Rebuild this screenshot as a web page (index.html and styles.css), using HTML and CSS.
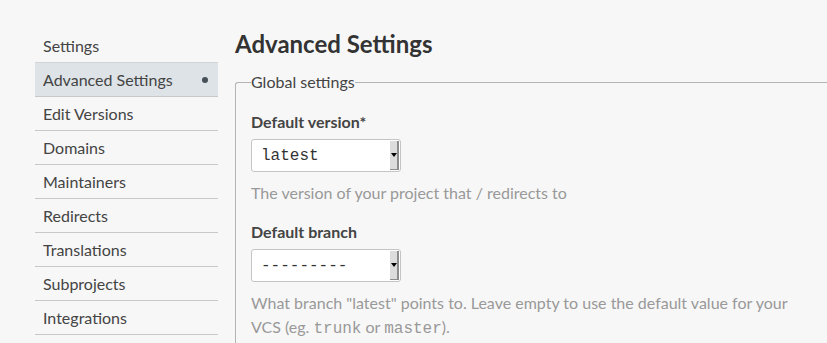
FILE: index.html
```html
<!DOCTYPE html>
<html lang="en">
<head>
<meta charset="utf-8">
<title>Advanced Settings</title>
<link rel="stylesheet" href="styles.css">
</head>
<body>
<div class="page">
  <nav class="sidenav">
    <ul>
      <li><a href="#">Settings</a></li>
      <li class="active"><a href="#">Advanced Settings</a></li>
      <li><a href="#">Edit Versions</a></li>
      <li><a href="#">Domains</a></li>
      <li><a href="#">Maintainers</a></li>
      <li><a href="#">Redirects</a></li>
      <li><a href="#">Translations</a></li>
      <li><a href="#">Subprojects</a></li>
      <li><a href="#">Integrations</a></li>
    </ul>
  </nav>
  <main class="content">
    <h1 class="title">Advanced Settings</h1>
    <fieldset class="group">
      <legend class="group-legend">Global settings</legend>
      <div class="field">
        <label class="field-label" for="dv">Default version*</label>
        <div class="select"><span class="select-value">latest</span><span class="select-btn"><span class="arrow"></span></span></div>
        <p class="help">The version of your project that / redirects to</p>
      </div>
      <div class="field">
        <label class="field-label" for="db">Default branch</label>
        <div class="select"><span class="select-value">---------</span><span class="select-btn"><span class="arrow"></span></span></div>
        <p class="help">What branch "latest" points to. Leave empty to use the default value for your VCS (eg. <code>trunk</code> or <code>master</code>).</p>
      </div>
    </fieldset>
  </main>
</div>
</body>
</html>
```
FILE: styles.css
```css
html, body {
  margin: 0;
  padding: 0;
  background: #f7f7f7;
  overflow: hidden;
}
body {
  font-family: Lato, "Open Sans", sans-serif;
  font-size: 16px;
  color: #444;
}
.page {
  display: flex;
  padding: 29px 0 0 35px;
  gap: 17px;
}
.sidenav {
  width: 183px;
  flex: none;
}
.sidenav ul {
  list-style: none;
  margin: 0;
  padding: 0;
}
.sidenav li {
  border-bottom: 1px solid #c8c8c8;
}
.sidenav li:first-child {
  border-bottom-color: #d4d4d4;
}
.sidenav a {
  display: flex;
  justify-content: space-between;
  align-items: center;
  height: 33px;
  padding: 0 8px;
  color: #444;
  text-decoration: none;
}
.sidenav li.active a {
  background: #dde3e6;
}
.sidenav li.active a::after {
  content: "";
  width: 6px;
  height: 6px;
  border-radius: 50%;
  background: #454f57;
  margin-right: 2px;
}
.content {
  flex: 1;
  min-width: 0;
}
.title {
  margin: -2px 0 11px;
  font-size: 24px;
  font-weight: 700;
  line-height: 34px;
  color: #333;
}
.group {
  margin: 0;
  border: 1px solid #b4b4b4;
  border-right: none;
  border-radius: 3px 0 0 0;
  padding: 20px 16px 0 15px;
}
.group-legend {
  padding: 0;
  line-height: 20px;
  color: #444;
}
.field {
  margin-bottom: 17px;
}
.field-label {
  display: block;
  font-weight: 700;
  line-height: 20px;
  margin-bottom: 7px;
  color: #444;
}
.select {
  display: flex;
  width: 148px;
  height: 31px;
  border: 1px solid #c4c4c4;
  border-radius: 3px;
  background: #fff;
  box-sizing: content-box;
}
.select-value {
  flex: 1;
  padding-left: 9px;
  font-family: "Liberation Mono", monospace;
  font-size: 16px;
  line-height: 32px;
  color: #333;
}
.select-btn {
  width: 7px;
  margin: 1px 1px 1px 0;
  background: #dcdcdc;
  border-right: 2px solid #8c8c8c;
  border-bottom: 1px solid #8c8c8c;
  display: flex;
  align-items: center;
  justify-content: center;
}
.arrow {
  width: 0;
  height: 0;
  border-left: 3px solid transparent;
  border-right: 3px solid transparent;
  border-top: 4px solid #000;
}
.help {
  margin: 9px 0 0;
  line-height: 24px;
  color: #999;
}
code {
  font-family: "Liberation Mono", monospace;
  font-size: 16px;
  color: #999;
}
```
